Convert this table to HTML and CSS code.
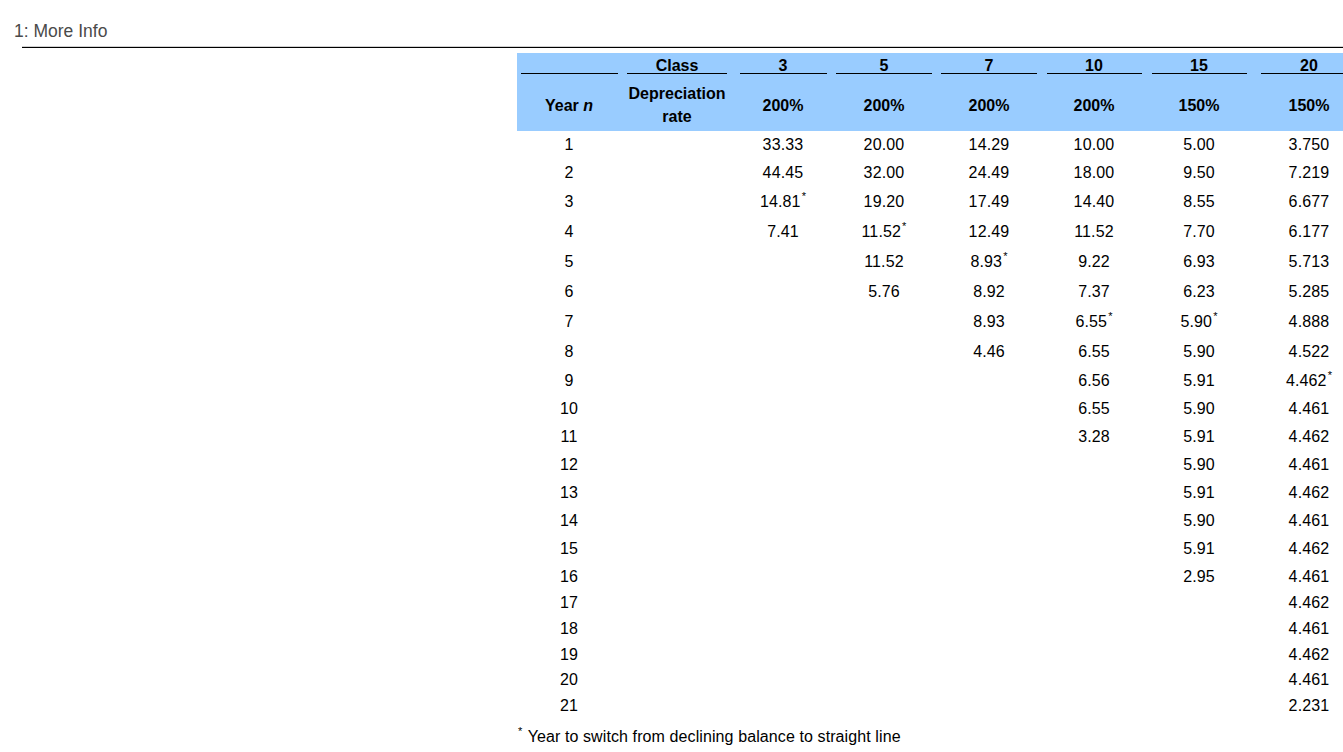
FILE: index.html
```html
<!DOCTYPE html>
<html>
<head>
<meta charset="utf-8">
<link rel="stylesheet" href="styles.css">
</head>
<body>
<div class="page">
  <div class="title">1: More Info</div>
  <div class="rule"></div>
  <div class="wrap">
    <table class="macrs">
      <colgroup>
        <col class="c1"><col class="c2"><col class="c3"><col class="c4"><col class="c5"><col class="c6"><col class="c7"><col class="c8">
      </colgroup>
      <thead>
        <tr class="hrow1">
          <th><div class="ul w97">&nbsp;</div></th>
          <th><div class="ul w100">Class</div></th>
          <th><div class="ul w87">3</div></th>
          <th><div class="ul w96">5</div></th>
          <th><div class="ul w96">7</div></th>
          <th><div class="ul w95">10</div></th>
          <th><div class="ul w95">15</div></th>
          <th><div class="ul w96">20</div></th>
        </tr>
        <tr class="hrow2">
          <th>Year <i>n</i></th>
          <th>Depreciation<br>rate</th>
          <th>200%</th>
          <th>200%</th>
          <th>200%</th>
          <th>200%</th>
          <th>150%</th>
          <th>150%</th>
        </tr>
      </thead>
      <tbody>
        <tr class="h27"><td>1</td><td></td><td>33.33</td><td>20.00</td><td>14.29</td><td>10.00</td><td>5.00</td><td>3.750</td></tr>
        <tr class="h29"><td>2</td><td></td><td>44.45</td><td>32.00</td><td>24.49</td><td>18.00</td><td>9.50</td><td>7.219</td></tr>
        <tr class="h30"><td>3</td><td></td><td>14.81<sup>*</sup></td><td>19.20</td><td>17.49</td><td>14.40</td><td>8.55</td><td>6.677</td></tr>
        <tr class="h30"><td>4</td><td></td><td>7.41</td><td>11.52<sup>*</sup></td><td>12.49</td><td>11.52</td><td>7.70</td><td>6.177</td></tr>
        <tr class="h30"><td>5</td><td></td><td></td><td>11.52</td><td>8.93<sup>*</sup></td><td>9.22</td><td>6.93</td><td>5.713</td></tr>
        <tr class="h30"><td>6</td><td></td><td></td><td>5.76</td><td>8.92</td><td>7.37</td><td>6.23</td><td>5.285</td></tr>
        <tr class="h30"><td>7</td><td></td><td></td><td></td><td>8.93</td><td>6.55<sup>*</sup></td><td>5.90<sup>*</sup></td><td>4.888</td></tr>
        <tr class="h29"><td>8</td><td></td><td></td><td></td><td>4.46</td><td>6.55</td><td>5.90</td><td>4.522</td></tr>
        <tr class="h29"><td>9</td><td></td><td></td><td></td><td></td><td>6.56</td><td>5.91</td><td>4.462<sup>*</sup></td></tr>
        <tr class="h28"><td>10</td><td></td><td></td><td></td><td></td><td>6.55</td><td>5.90</td><td>4.461</td></tr>
        <tr class="h28"><td>11</td><td></td><td></td><td></td><td></td><td>3.28</td><td>5.91</td><td>4.462</td></tr>
        <tr class="h28"><td>12</td><td></td><td></td><td></td><td></td><td></td><td>5.90</td><td>4.461</td></tr>
        <tr class="h28"><td>13</td><td></td><td></td><td></td><td></td><td></td><td>5.91</td><td>4.462</td></tr>
        <tr class="h28"><td>14</td><td></td><td></td><td></td><td></td><td></td><td>5.90</td><td>4.461</td></tr>
        <tr class="h28"><td>15</td><td></td><td></td><td></td><td></td><td></td><td>5.91</td><td>4.462</td></tr>
        <tr class="h27"><td>16</td><td></td><td></td><td></td><td></td><td></td><td>2.95</td><td>4.461</td></tr>
        <tr class="h26"><td>17</td><td></td><td></td><td></td><td></td><td></td><td></td><td>4.462</td></tr>
        <tr class="h26"><td>18</td><td></td><td></td><td></td><td></td><td></td><td></td><td>4.461</td></tr>
        <tr class="h25"><td>19</td><td></td><td></td><td></td><td></td><td></td><td></td><td>4.462</td></tr>
        <tr class="h26"><td>20</td><td></td><td></td><td></td><td></td><td></td><td></td><td>4.461</td></tr>
        <tr class="h25"><td>21</td><td></td><td></td><td></td><td></td><td></td><td></td><td>2.231</td></tr>
      </tbody>
    </table>
    <div class="note"><sup>*</sup> Year to switch from declining balance to straight line</div>
  </div>
</div>
</body>
</html>
```
FILE: styles.css
```css
html, body {
  margin: 0;
  padding: 0;
  background: #fff;
  overflow: hidden;
}
body {
  font-family: "Liberation Sans", Arial, sans-serif;
  color: #000;
}
.page {
  width: 1343px;
  height: 752px;
  overflow: hidden;
}
.title {
  padding: 21px 0 0 14px;
  font-size: 17.5px;
  line-height: 20px;
  color: #4a4a4a;
}
.rule {
  margin: 5px 0 0 22px;
  height: 0;
  border-top: 1px solid #d0d0d0;
  border-bottom: 1px solid #000;
}
.wrap {
  margin: 5px 0 0 517px;
  width: 900px;
}
.macrs {
  border-collapse: collapse;
  table-layout: fixed;
  width: 848px;
  font-size: 16px;
}
.c1 { width: 104px; }
.c2 { width: 112px; }
.c3 { width: 100px; }
.c4 { width: 102px; }
.c5 { width: 108px; }
.c6 { width: 102px; }
.c7 { width: 108px; }
.c8 { width: 112px; }
.macrs th, .macrs td {
  padding: 0;
  text-align: center;
  vertical-align: middle;
}
.macrs thead th {
  background: #99ccff;
  font-weight: bold;
}
.hrow1 th {
  height: 23px;
  vertical-align: top;
}
.ul {
  margin: 4px auto 0;
  padding-top: 1px;
  line-height: 15px;
  border-bottom: 1px solid #000;
}
.w87 { width: 87px; }
.w95 { width: 95px; }
.w96 { width: 96px; }
.w97 { width: 97px; }
.w100 { width: 100px; }
.hrow2 th {
  height: 52px;
  padding-top: 3px;
  line-height: 23px;
}
.hrow2 i {
  font-style: italic;
}
.macrs td {
  line-height: 18px;
  letter-spacing: 0.15px;
}
.macrs sup, .note sup {
  font-size: 11px;
  line-height: 0;
  vertical-align: 7px;
  margin-left: 1px;
}
.h25 td { height: 25px; }
.h26 td { height: 26px; }
.h27 td { height: 27px; }
.h28 td { height: 28px; }
.h29 td { height: 29px; }
.h30 td { height: 30px; }
.note {
  margin-top: 9px;
  font-size: 16px;
  line-height: 20px;
  padding-left: 0;
  letter-spacing: 0.1px;
}
.note sup {
  margin-left: 1px;
  margin-right: 1px;
}
```
